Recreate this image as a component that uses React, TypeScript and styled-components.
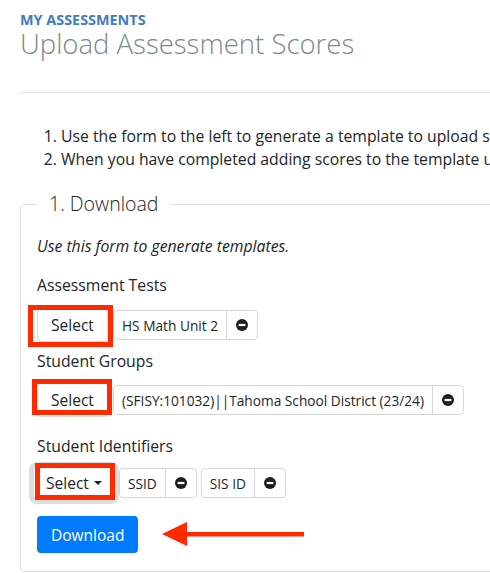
import React from 'react';
import styled, { createGlobalStyle } from 'styled-components';

const GlobalStyle = createGlobalStyle`
  html, body {
    margin: 0;
    padding: 0;
    overflow: hidden;
    background: #ffffff;
  }
  body {
    font-family: 'Open Sans', 'Noto Sans', 'Liberation Sans', sans-serif;
    color: #212529;
  }
`;

const Page = styled.div`
  width: 900px;
  padding: 12px 0 0 20px;
  box-sizing: border-box;
`;

const Eyebrow = styled.div`
  font-size: 14.4px;
  font-weight: 700;
  line-height: 16px;
  color: #3f7cc4;
  text-transform: uppercase;
`;

const Title = styled.h1`
  margin: 1px 0 0;
  font-size: 27.5px;
  font-weight: 300;
  line-height: 30px;
  color: #7b8a8b;
`;

const Rule = styled.hr`
  margin: 33px 0 0;
  border: 0;
  border-top: 1px solid #e4e4e4;
`;

const Steps = styled.ol`
  margin: 32px 0 0;
  padding-left: 41px;
  font-size: 15.75px;
  line-height: 23px;
  white-space: nowrap;
`;

const Panel = styled.fieldset`
  margin: 22px 0 0;
  padding: 20px 16px 18px;
  min-width: 0;
  border: 1px solid #dedede;
  border-radius: 4px;
`;

const PanelTitle = styled.legend`
  padding: 0 12px;
  font-size: 19.5px;
  font-weight: 300;
  line-height: 22px;
  color: #212529;
`;

const Hint = styled.p`
  margin: 0;
  font-size: 15.75px;
  font-style: italic;
  line-height: 23px;
`;

const FieldLabel = styled.div<{ $gap: number }>`
  margin-top: ${({ $gap }) => $gap}px;
  font-size: 15.75px;
  line-height: 23px;
`;

const ControlRow = styled.div<{ $gap: number; $space: number }>`
  display: flex;
  align-items: center;
  gap: ${({ $space }) => $space}px;
  margin-top: ${({ $gap }) => $gap}px;
`;

const PickerWrap = styled.span<{ $shift?: number }>`
  position: relative;
  display: inline-flex;
  margin-left: ${({ $shift = 0 }) => $shift}px;
`;

const PickerButton = styled.button<{ $open?: boolean; $width: number }>`
  display: inline-flex;
  align-items: center;
  justify-content: center;
  gap: 5px;
  width: ${({ $width }) => $width}px;
  height: 34px;
  padding: 0;
  font-family: inherit;
  font-size: 15.5px;
  color: #212529;
  background: #ffffff;
  border: 1px solid #d9d9d9;
  border-radius: 4px;
  box-shadow: ${({ $open }) => ($open ? '0 0 0 4px #dcdee1' : 'none')};
`;

const Caret = styled.span`
  width: 0;
  height: 0;
  border-top: 4px solid #212529;
  border-left: 4px solid transparent;
  border-right: 4px solid transparent;
`;

// annotation box drawn over the button in the screenshot
const Highlight = styled.span<{ $inset: [number, number, number, number] }>`
  position: absolute;
  top: ${({ $inset }) => $inset[0]}px;
  right: ${({ $inset }) => $inset[1]}px;
  bottom: ${({ $inset }) => $inset[2]}px;
  left: ${({ $inset }) => $inset[3]}px;
  border: 5px solid #ff2a00;
  pointer-events: none;
`;

const Chip = styled.span`
  display: inline-flex;
  align-items: stretch;
  height: 30px;
  box-sizing: border-box;
  background: #ffffff;
  border: 1px solid #d6d6d6;
  border-radius: 4px;
`;

const ChipText = styled.span`
  display: flex;
  align-items: center;
  padding: 0 8px;
  font-size: 13.7px;
  white-space: nowrap;
`;

const ChipRemove = styled.span`
  display: flex;
  align-items: center;
  justify-content: center;
  width: 30px;
  border-left: 1px solid #d6d6d6;
`;

const ActionRow = styled.div`
  display: flex;
  align-items: center;
  margin-top: 16px;
`;

const PrimaryButton = styled.button`
  height: 37px;
  padding: 0 14px;
  font-family: inherit;
  font-size: 15.5px;
  color: #ffffff;
  background: #007bff;
  border: 0;
  border-radius: 4px;
`;

const Arrow = styled.svg`
  margin-left: 24px;
  display: block;
`;

function MinusIcon() {
  return (
    <svg width="12" height="12" viewBox="0 0 12 12">
      <circle cx="6" cy="6" r="6" fill="#1e1e1e" />
      <rect x="2.6" y="4.9" width="6.8" height="2.2" fill="#ffffff" />
    </svg>
  );
}

function Tag({ label }: { label: string }) {
  return (
    <Chip>
      <ChipText>{label}</ChipText>
      <ChipRemove>
        <MinusIcon />
      </ChipRemove>
    </Chip>
  );
}

export default function App() {
  return (
    <Page>
      <GlobalStyle />
      <Eyebrow>My Assessments</Eyebrow>
      <Title>Upload Assessment Scores</Title>
      <Rule />
      <Steps>
        <li>Use the form to the left to generate a template to upload scores for your students.</li>
        <li>When you have completed adding scores to the template upload it using the form on the right.</li>
      </Steps>

      <Panel>
        <PanelTitle>1. Download</PanelTitle>
        <Hint>Use this form to generate templates.</Hint>

        <FieldLabel $gap={16}>Assessment Tests</FieldLabel>
        <ControlRow $gap={11} $space={5}>
          <PickerWrap>
            <PickerButton $width={71}>Select</PickerButton>
            <Highlight $inset={[-3, -5, -5, -9]} />
          </PickerWrap>
          <Tag label="HS Math Unit 2" />
        </ControlRow>

        <FieldLabel $gap={8}>Student Groups</FieldLabel>
        <ControlRow $gap={10} $space={5}>
          <PickerWrap>
            <PickerButton $width={71}>Select</PickerButton>
            <Highlight $inset={[-4, -4, 2, -5]} />
          </PickerWrap>
          <Tag label="(SFISY:101032)||Tahoma School District (23/24)" />
        </ControlRow>

        <FieldLabel $gap={18}>Student Identifiers</FieldLabel>
        <ControlRow $gap={8} $space={4}>
          <PickerWrap $shift={-4}>
            <PickerButton $width={82} $open>
              Select
              <Caret />
            </PickerButton>
            <Highlight $inset={[-3, 0, 0, 2]} />
          </PickerWrap>
          <Tag label="SSID" />
          <Tag label="SIS ID" />
        </ControlRow>

        <ActionRow>
          <PrimaryButton>Download</PrimaryButton>
          <Arrow width="142" height="26" viewBox="0 0 142 26">
            <polygon points="0,12 25,0 25,24" fill="#ff2a00" />
            <rect x="22" y="10" width="120" height="4.5" fill="#ff2a00" />
          </Arrow>
        </ActionRow>
      </Panel>
    </Page>
  );
}
